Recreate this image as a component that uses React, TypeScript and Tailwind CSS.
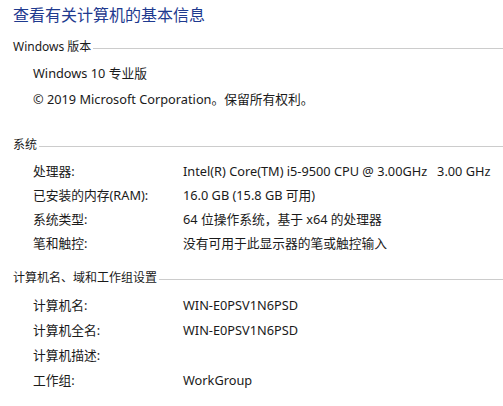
import React from "react";

const FONT = { fontFamily: '"Segoe UI", "Noto Sans", "Noto Sans CJK SC", sans-serif' };

// Section header with trailing rule
const SectionHeader: React.FC<{ title: string; className?: string }> = ({ title, className }) => (
  <div className={`flex items-center h-[20px] ${className || ""}`}>
    <span className="text-[12px] text-[#1a1a1a] whitespace-nowrap">{title}</span>
    <div className="ml-[2px] h-px bg-[#cccccc] flex-1 mt-[3px]"></div>
  </div>
);

// Label / value row
const InfoRow: React.FC<{ label: string; value?: string; h: string }> = ({ label, value, h }) => (
  <div className={`flex items-center ${h} pl-[20px] text-[12.75px] text-[#1a1a1a] whitespace-pre`}>
    <div className="w-[150px] shrink-0">{label}</div>
    <div>{value}</div>
  </div>
);

export default function App() {
  return (
    <div className="w-[503px] h-[406px] bg-white pl-[13px] overflow-hidden" style={FONT}>
      <div className="h-[30px] flex items-center text-[16px] text-[#1e3a8f]">
        查看有关计算机的基本信息
      </div>

      <SectionHeader title="Windows 版本" className="mt-[7px]" />
      <div className="mt-[4px]">
        <div className="flex items-center h-[26px] pl-[20px] text-[12.75px] text-[#1a1a1a]">Windows 10 专业版</div>
        <div className="flex items-center h-[26px] pl-[20px] text-[12.75px] text-[#1a1a1a]">© 2019 Microsoft Corporation。保留所有权利。</div>
      </div>

      <SectionHeader title="系统" className="mt-[22px]" />
      <div className="mt-[5px]">
        <InfoRow h="h-[24px]" label="处理器:" value="Intel(R) Core(TM) i5-9500 CPU @ 3.00GHz   3.00 GHz" />
        <InfoRow h="h-[24px]" label="已安装的内存(RAM):" value="16.0 GB (15.8 GB 可用)" />
        <InfoRow h="h-[24px]" label="系统类型:" value="64 位操作系统，基于 x64 的处理器" />
        <InfoRow h="h-[24px]" label="笔和触控:" value="没有可用于此显示器的笔或触控输入" />
      </div>

      <SectionHeader title="计算机名、域和工作组设置" className="mt-[12px]" />
      <div className="mt-[5px]">
        <InfoRow h="h-[25px]" label="计算机名:" value="WIN-E0PSV1N6PSD" />
        <InfoRow h="h-[25px]" label="计算机全名:" value="WIN-E0PSV1N6PSD" />
        <InfoRow h="h-[25px]" label="计算机描述:" />
        <InfoRow h="h-[25px]" label="工作组:" value="WorkGroup" />
      </div>
    </div>
  );
}
